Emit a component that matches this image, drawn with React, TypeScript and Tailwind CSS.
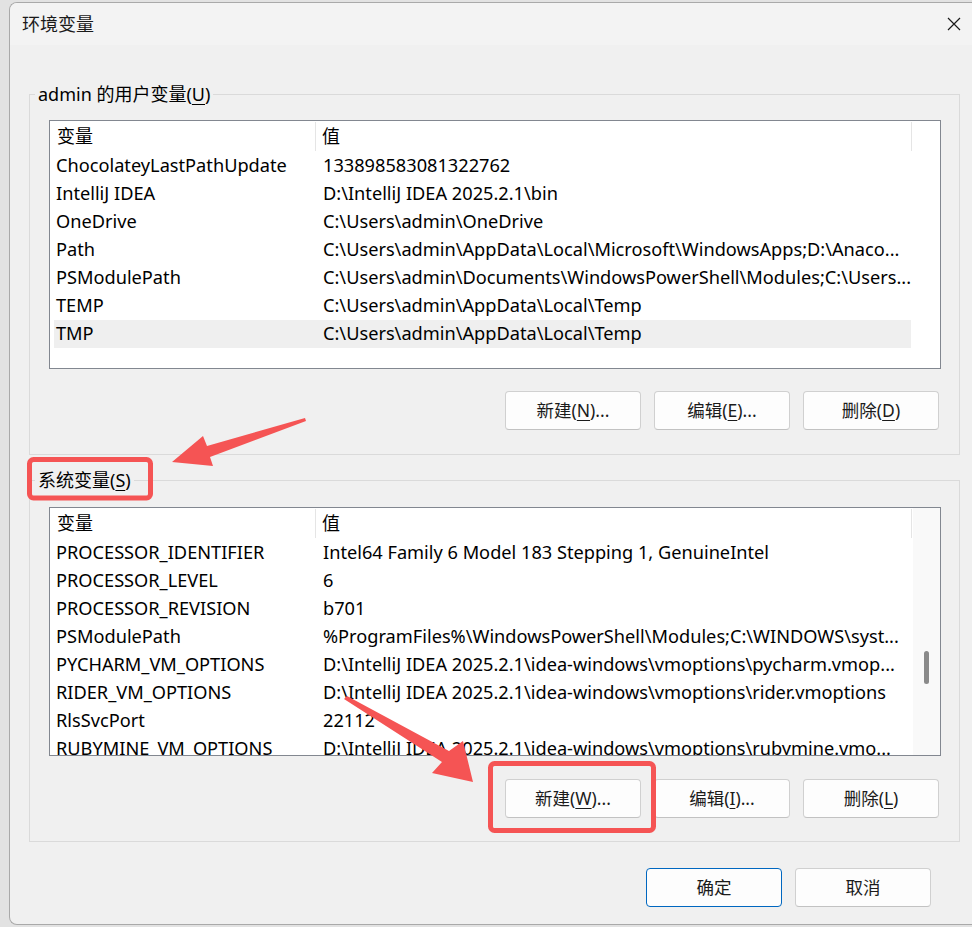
import React from 'react';

type EnvVar = { name: string; value: string };

const USER_VARS: EnvVar[] = [
  { name: 'ChocolateyLastPathUpdate', value: '133898583081322762' },
  { name: 'IntelliJ IDEA', value: 'D:\\IntelliJ IDEA 2025.2.1\\bin' },
  { name: 'OneDrive', value: 'C:\\Users\\admin\\OneDrive' },
  { name: 'Path', value: 'C:\\Users\\admin\\AppData\\Local\\Microsoft\\WindowsApps;D:\\Anaco...' },
  { name: 'PSModulePath', value: 'C:\\Users\\admin\\Documents\\WindowsPowerShell\\Modules;C:\\Users...' },
  { name: 'TEMP', value: 'C:\\Users\\admin\\AppData\\Local\\Temp' },
  { name: 'TMP', value: 'C:\\Users\\admin\\AppData\\Local\\Temp' },
];

const SYSTEM_VARS: EnvVar[] = [
  { name: 'PROCESSOR_IDENTIFIER', value: 'Intel64 Family 6 Model 183 Stepping 1, GenuineIntel' },
  { name: 'PROCESSOR_LEVEL', value: '6' },
  { name: 'PROCESSOR_REVISION', value: 'b701' },
  { name: 'PSModulePath', value: '%ProgramFiles%\\WindowsPowerShell\\Modules;C:\\WINDOWS\\syst...' },
  { name: 'PYCHARM_VM_OPTIONS', value: 'D:\\IntelliJ IDEA 2025.2.1\\idea-windows\\vmoptions\\pycharm.vmop...' },
  { name: 'RIDER_VM_OPTIONS', value: 'D:\\IntelliJ IDEA 2025.2.1\\idea-windows\\vmoptions\\rider.vmoptions' },
  { name: 'RlsSvcPort', value: '22112' },
  { name: 'RUBYMINE_VM_OPTIONS', value: 'D:\\IntelliJ IDEA 2025.2.1\\idea-windows\\vmoptions\\rubymine.vmo...' },
];

// label with an underlined access key, e.g. 新建(N)...
function AccessKey({ before, k, after }: { before: string; k: string; after?: string }) {
  return (
    <>
      {before}(<span className="underline underline-offset-[3px]">{k}</span>){after}
    </>
  );
}

function WinButton({ children, primary }: { children: React.ReactNode; primary?: boolean }) {
  return (
    <button
      className={`h-[39px] w-[136px] rounded-[4px] border bg-[#fdfdfd] text-[17.5px] text-[#1b1b1b] flex items-center justify-center ${
        primary ? 'border-[#0067c0]' : 'border-[#d0d0d0] border-b-[#c2c2c2]'
      }`}
    >
      {children}
    </button>
  );
}

function ListView({ rows, scroll, selected }: { rows: EnvVar[]; scroll?: boolean; selected?: number }) {
  return (
    <div className="w-[892px] h-[249px] border border-[#828790] bg-white overflow-hidden flex">
      <div className="w-[863px] shrink-0">
        {/* Header */}
        <div className="h-[31px] flex items-center">
          <div className="w-[265px] pl-[7px] leading-[31px]">变量</div>
          <div className="w-px h-[29px] bg-[#e5e5e5]" />
          <div className="w-[595px] pl-[6px] leading-[31px]">值</div>
          <div className="w-px h-[29px] bg-[#e5e5e5]" />
        </div>
        {/* Rows */}
        {rows.map((r, i) => (
          <div
            key={r.name + i}
            className={`ml-[4px] w-[857px] h-[28px] flex items-center whitespace-nowrap text-[18.2px] ${
              selected === i ? 'bg-[#efefef]' : ''
            }`}
          >
            <div className="w-[261px] pl-[2px] overflow-hidden">{r.name}</div>
            <div className="w-[596px] pl-[8px] overflow-hidden">{r.value}</div>
          </div>
        ))}
      </div>
      {scroll && (
        <div className="w-[27px] h-full bg-[#f9f9f9] flex justify-center">
          <div className="mt-[143px] w-[5px] h-[33px] rounded-full bg-[#8a8a8a]" />
        </div>
      )}
    </div>
  );
}

function GroupBox({
  label,
  heightClass,
  topPad,
  children,
}: {
  label: React.ReactNode;
  heightClass: string;
  topPad: string;
  children: React.ReactNode;
}) {
  return (
    <div className={`relative w-[931px] border border-[#dadada] ${heightClass} ${topPad} pl-[19px]`}>
      <span className="absolute left-[5px] top-[-13px] px-[3px] bg-[#f0f0f0] leading-[24px] text-[18px]">
        {label}
      </span>
      {children}
    </div>
  );
}

export default function App() {
  return (
    <div className="relative w-[972px] h-[927px] overflow-hidden bg-[#e2e2e2] pl-[9px] pt-[2px] font-['Noto_Sans','Noto_Sans_CJK_SC',sans-serif] text-[18px] text-black">
      {/* Dialog window */}
      <div className="w-[963px] h-[923px] rounded-tl-[8px] rounded-bl-[8px] border-l border-t border-b border-[#a9a9a9] bg-[#f0f0f0] flex flex-col overflow-hidden">
        {/* Title bar */}
        <div className="h-[42px] bg-[#f3f3f3] flex items-center justify-between">
          <span className="pl-[12px] text-[18px] text-[#1a1a1a]">环境变量</span>
          <div className="w-[34px] h-[42px] flex items-center justify-center mr-[1px]">
            <svg width="14" height="14" viewBox="0 0 14 14">
              <path d="M1 1 L13 13 M13 1 L1 13" stroke="#1a1a1a" strokeWidth="1.2" fill="none" />
            </svg>
          </div>
        </div>

        {/* Body */}
        <div className="pl-[19px] pt-[49px]">
          <GroupBox label={<AccessKey before="admin 的用户变量" k="U" />} heightClass="h-[361px]" topPad="pt-[25px]">
            <ListView rows={USER_VARS} selected={6} />
            <div className="mt-[22px] pr-[20px] flex justify-end gap-[13px]">
              <WinButton><AccessKey before="新建" k="N" after="..." /></WinButton>
              <WinButton><AccessKey before="编辑" k="E" after="..." /></WinButton>
              <WinButton><AccessKey before="删除" k="D" /></WinButton>
            </div>
          </GroupBox>

          <div className="mt-[25px]">
            <GroupBox label={<AccessKey before="系统变量" k="S" />} heightClass="h-[362px]" topPad="pt-[26px]">
              <ListView rows={SYSTEM_VARS} scroll />
              <div className="mt-[23px] pr-[20px] flex justify-end gap-[13px]">
                <WinButton><AccessKey before="新建" k="W" after="..." /></WinButton>
                <WinButton><AccessKey before="编辑" k="I" after="..." /></WinButton>
                <WinButton><AccessKey before="删除" k="L" /></WinButton>
              </div>
            </GroupBox>
          </div>

          <div className="mt-[26px] pr-[41px] flex justify-end gap-[13px]">
            <WinButton primary>确定</WinButton>
            <WinButton>取消</WinButton>
          </div>
        </div>
      </div>

      {/* Red annotations drawn over the screenshot */}
      <svg className="absolute left-0 top-0 pointer-events-none" width="972" height="927" viewBox="0 0 972 927">
        <rect x="29.5" y="459.5" width="121" height="38.5" rx="4" fill="none" stroke="#f55454" strokeWidth="5" />
        <rect x="490.5" y="763.5" width="163" height="67" rx="4" fill="none" stroke="#f55454" strokeWidth="5" />
        <polygon
          points="305,418 306,421 210,457 213,466 172,462 203,436 207,446"
          fill="#f55454"
        />
        <polygon
          points="344,699 347,696 449,751 463,741 473,782 432,773 442,762"
          fill="#f55454"
        />
      </svg>
    </div>
  );
}
